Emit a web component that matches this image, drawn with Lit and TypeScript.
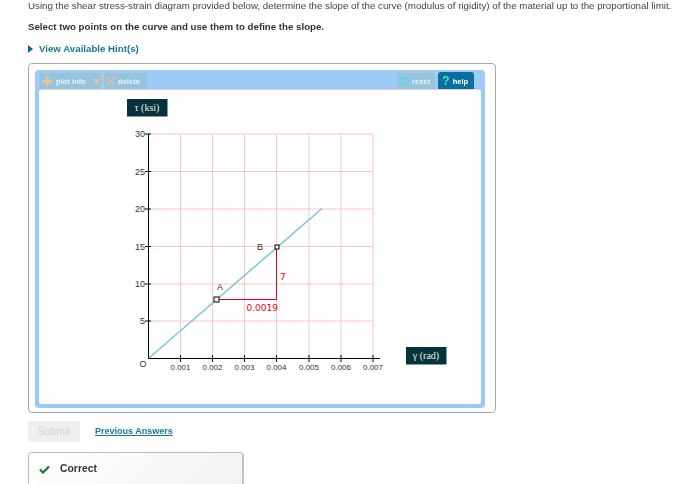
import { LitElement, html, css, svg } from "lit";
import { customElement } from "lit/decorators.js";

const XS = [180.5, 212.5, 244.5, 276.5, 309, 341, 373];
const YS = [134, 171.5, 209, 246.5, 284, 321];

@customElement("app-root")
export class AppRoot extends LitElement {
  static styles = css`
    :host { display: block; width: 688px; height: 484px; overflow: hidden; background: #fff; font-family: "Liberation Sans", Arial, sans-serif; color: #3a3a3a; }
    .page { padding: 0 0 0 28px; display: flex; flex-direction: column; }
    p { margin: 0; }
    .soft { filter: blur(0.3px); }
    .q { font-size: 9.74px; line-height: 11px; white-space: nowrap; color: #444; }
    .s { font-size: 9.7px; line-height: 12px; margin-top: 10px; font-weight: bold; color: #333; white-space: nowrap; }
    .hint { display: flex; align-items: center; gap: 6px; margin-top: 9px; height: 13px; font-size: 9.7px; font-weight: bold; color: #157a96; }
    .frame { box-sizing: border-box; margin-top: 8px; width: 468px; height: 350px; border: 1px solid #a8a8a8; border-radius: 4px; padding: 6px 10px 5px 6px; }
    .panel { box-sizing: border-box; width: 450px; height: 338px; background: #9bcbf6; border-radius: 4px; padding: 0 4px 4px 4px; display: flex; flex-direction: column; }
    .bar { height: 19px; display: flex; flex-shrink: 0; align-items: flex-end; }
    .tab { box-sizing: border-box; height: 17px; display: flex; align-items: center; gap: 3px; border-radius: 3px 3px 0 0; background: #94c4df; border: 1px solid #a6cbdf; border-bottom: 0; font-size: 7.6px; font-weight: bold; color: #eaf4f9; }
    .plot-tab { width: 63px; padding-left: 2px; margin-right: 1px; }
    .del-tab { width: 45px; padding-left: 2px; }
    .spacer { flex: 1; }
    .reset-tab { width: 39px; padding-left: 1px; margin-right: 2px; background: #97c5dc; gap: 2px; }
    .help-tab { width: 36px; padding-left: 3px; margin-right: 7px; background: #0b6ea3; border-color: #0b6ea3; color: #fff; }
    .q-mark { color: #3fe0b8; font-size: 12.5px; font-weight: bold; line-height: 12px; }
    .arrow { margin-left: 4px; }
    .canvas { flex: 1; background: #fff; border-radius: 2px; border-top: 1px solid #d4d4d4; box-sizing: border-box; min-height: 0; }
    .canvas svg { display: block; }
    .actions { display: flex; align-items: center; margin-top: 8px; height: 21px; }
    .submit { width: 52px; height: 21px; display: flex; align-items: center; justify-content: center; background: #efefef; color: #d2d2d2; font-size: 10.4px; }
    .prev { margin-left: 15px; margin-bottom: 2px; font-size: 9px; font-weight: bold; color: #157a96; text-decoration: underline; }
    .correct { box-sizing: border-box; margin-top: 10px; width: 216px; height: 44px; border: 1px solid #bcbcbc; border-right: 2px solid #c4c4c4; border-radius: 4px; background: linear-gradient(135deg, #fff, #f2f2f2); padding: 10px 0 0 10px; display: flex; align-items: flex-start; gap: 10px; font-size: 10.4px; font-weight: bold; color: #333; }
  `;

  private plot() {
    const t = "font-family:'Liberation Sans',Arial,sans-serif";
    const d = "font-family:'DejaVu Sans',sans-serif";
    return html`<svg width="442" height="314" viewBox="39 90 442 314">
      ${svg`
      <g stroke="#ffc4c8" stroke-width="1" fill="none">
        ${XS.map((x) => svg`<line x1=${x} y1="134" x2=${x} y2="358"/>`)}
        ${YS.map((y) => svg`<line x1="148" y1=${y} x2="373" y2=${y}/>`)}
      </g>
      <line x1="148.5" y1="134" x2="148.5" y2="358" stroke="#000" stroke-width="1"/>
      <line x1="148" y1="358.5" x2="380" y2="358.5" stroke="#000" stroke-width="1"/>
      <g stroke="#000" stroke-width="1">
        ${YS.map((y) => svg`<line x1="145" y1=${y} x2="151" y2=${y}/>`)}
        ${XS.map((x) => svg`<line x1=${x} y1="355" x2=${x} y2="362"/>`)}
      </g>
      <g style=${t} font-size="9" fill="#333" text-anchor="end">
        ${["30", "25", "20", "15", "10", "5"].map((l, i) => svg`<text x="145" y=${YS[i] + 3}>${l}</text>`)}
      </g>
      <text x="139.5" y="367" style=${t} font-size="9" fill="#333">O</text>
      <g style=${t} font-size="8" fill="#333" text-anchor="middle">
        ${XS.map((x, i) => svg`<text x=${x} y="370">0.00${i + 1}</text>`)}
      </g>
      <line x1="149" y1="358" x2="322" y2="208.5" stroke="#7cc6da" stroke-width="1.6"/>
      <path d="M216.5 299.5H276.5V247" fill="none" stroke="#e60012" stroke-width="1"/>
      <rect x="214" y="297" width="5" height="5" fill="#fff" stroke="#000"/>
      <rect x="275" y="245" width="4" height="4" fill="#fff" stroke="#000"/>
      <text x="217" y="290" style=${t} font-size="9" fill="#333">A</text>
      <text x="257" y="250" style=${t} font-size="9" fill="#333">B</text>
      <text x="280" y="280" style=${d} font-size="9" fill="#e60012">7</text>
      <text x="246.5" y="311" style=${d} font-size="9" fill="#e60012">0.0019</text>
      <rect x="127" y="99" width="40.5" height="17.5" fill="#06323c"/>
      <text x="147" y="111" text-anchor="middle" style="font-family:'Liberation Serif',serif" font-size="10" fill="#e8f0f0">τ (ksi)</text>
      <rect x="406" y="347" width="40.5" height="17.5" fill="#06323c"/>
      <text x="426" y="359" text-anchor="middle" style="font-family:'Liberation Serif',serif" font-size="10" fill="#e8f0f0">γ (rad)</text>
      `}
    </svg>`;
  }

  render() {
    return html`<div class="page">
      <p class="q soft">Using the shear stress-strain diagram provided below, determine the slope of the curve (modulus of rigidity) of the material up to the proportional limit.</p>
      <p class="s soft">Select two points on the curve and use them to define the slope.</p>
      <div class="hint soft">
        <svg width="5" height="8" viewBox="0 0 5 8"><path d="M0 0L5 4L0 8Z" fill="#0e6b88"/></svg>
        <span>View Available Hint(s)</span>
      </div>
      <div class="frame">
        <div class="panel">
          <div class="bar">
            <div class="tab plot-tab soft">
              <svg width="11" height="11" viewBox="0 0 11 11"><path d="M5.5 0.5V10.5M0.5 5.5H10.5" stroke="#f6c58c" stroke-width="2.4"/></svg>
              <span>plot info</span>
              <svg class="arrow" width="7" height="5" viewBox="0 0 7 5"><path d="M0 0H7L3.5 5Z" fill="#f0c48e"/></svg>
            </div>
            <div class="tab del-tab soft">
              <svg width="9" height="10" viewBox="0 0 9 10"><path d="M0.5 1L8.5 9M8.5 1L0.5 9" stroke="#f2b5a0" stroke-width="1.6"/></svg>
              <span>delete</span>
            </div>
            <div class="spacer"></div>
            <div class="tab reset-tab soft">
              <svg width="11" height="12" viewBox="0 0 11 12"><path d="M3 2.8A4.2 4.2 0 1 0 8.2 3M5 0.8V4.2L8.6 2.2" fill="none" stroke="#62d2e8" stroke-width="1.4"/></svg>
              <span>reset</span>
            </div>
            <div class="tab help-tab soft">
              <span class="q-mark">?</span>
              <span>help</span>
            </div>
          </div>
          <div class="canvas">${this.plot()}</div>
        </div>
      </div>
      <div class="actions">
        <div class="submit soft">Submit</div>
        <span class="prev soft">Previous Answers</span>
      </div>
      <div class="correct soft">
        <svg width="11" height="9" viewBox="0 0 11 9" style="margin-top:2px"><path d="M1 4.5L4 7.5L10 1.5" fill="none" stroke="#17803d" stroke-width="2.4"/></svg>
        <span>Correct</span>
      </div>
    </div>`;
  }
}
